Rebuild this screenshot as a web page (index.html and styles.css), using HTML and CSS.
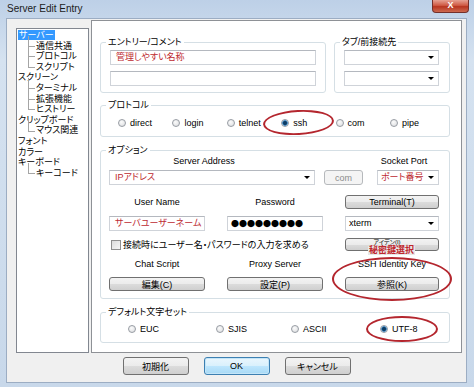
FILE: index.html
```html
<!DOCTYPE html>
<html lang="ja">
<head>
    <meta charset="UTF-8">
    <title>Server Edit Entry</title>
    <link rel="stylesheet" href="styles.css">
</head>
<body>
<div class="window">
    <div class="titlebar">
        <span class="title">Server Edit Entry</span>
        <span class="close">X</span>
    </div>

    <div class="client">
        <div class="top">
            <!-- settings tree -->
            <ul class="tree">
                <li><span class="sel">サーバー</span>
                    <ul class="children">
                        <li>通信共通</li>
                        <li>プロトコル</li>
                        <li>スクリプト</li>
                    </ul>
                </li>
                <li>スクリーン
                    <ul class="children">
                        <li>ターミナル</li>
                        <li>拡張機能</li>
                        <li>ヒストリー</li>
                    </ul>
                </li>
                <li>クリップボード
                    <ul class="children">
                        <li>マウス関連</li>
                    </ul>
                </li>
                <li>フォント</li>
                <li>カラー</li>
                <li>キーボード
                    <ul class="children">
                        <li>キーコード</li>
                    </ul>
                </li>
            </ul>

            <div class="page">
                <div class="row-top">
                    <fieldset class="group entry">
                        <legend>エントリー/コメント</legend>
                        <div class="body stack">
                            <div class="edit red">管理しやすい名称</div>
                            <div class="edit"></div>
                        </div>
                    </fieldset>
                    <fieldset class="group tab">
                        <legend>タブ/前接続先</legend>
                        <div class="body stack">
                            <div class="combo"><span></span><i class="arrow"></i></div>
                            <div class="combo"><span></span><i class="arrow"></i></div>
                        </div>
                    </fieldset>
                </div>

                <fieldset class="group protocol">
                    <legend>プロトコル</legend>
                    <div class="body radios">
                        <label class="radio"><span class="dot"></span>direct</label>
                        <label class="radio"><span class="dot"></span>login</label>
                        <label class="radio"><span class="dot"></span>telnet</label>
                        <label class="radio"><span class="dot on"></span>ssh</label>
                        <label class="radio"><span class="dot"></span>com</label>
                        <label class="radio"><span class="dot"></span>pipe</label>
                    </div>
                </fieldset>

                <fieldset class="group options">
                    <legend>オプション</legend>
                    <div class="body">
                        <div class="addr-labels">
                            <span class="lbl-addr">Server Address</span>
                            <span class="lbl-port">Socket Port</span>
                        </div>
                        <div class="addr-row">
                            <div class="combo addr"><span class="red">IPアドレス</span><i class="arrow"></i></div>
                            <div class="btn disabled com">com</div>
                            <div class="combo port"><span class="red">ポート番号</span><i class="arrow"></i></div>
                        </div>
                        <div class="opt-grid">
                            <span class="lbl">User Name</span>
                            <span class="lbl">Password</span>
                            <div class="btn">Terminal(T)</div>

                            <div class="edit red">サーバユーザーネーム</div>
                            <div class="edit pass"><span class="dots">●●●●●●●●●</span></div>
                            <div class="combo"><span>xterm</span><i class="arrow"></i></div>

                            <label class="check"><span class="box"></span>接続時にユーザー名・パスワードの入力を求める</label>
                            <div class="btn ident"><span class="cap">アイデン(I)</span><span class="note">秘密鍵選択</span></div>

                            <span class="lbl">Chat Script</span>
                            <span class="lbl">Proxy Server</span>
                            <span class="lbl">SSH Identity Key</span>

                            <div class="btn">編集(C)</div>
                            <div class="btn">設定(P)</div>
                            <div class="btn">参照(K)</div>
                        </div>
                    </div>
                </fieldset>

                <fieldset class="group charset">
                    <legend>デフォルト文字セット</legend>
                    <div class="body radios">
                        <label class="radio"><span class="dot"></span>EUC</label>
                        <label class="radio"><span class="dot"></span>SJIS</label>
                        <label class="radio"><span class="dot"></span>ASCII</label>
                        <label class="radio"><span class="dot on"></span>UTF-8</label>
                    </div>
                </fieldset>
            </div>
        </div>

        <div class="buttons">
            <div class="btn">初期化</div>
            <div class="btn default">OK</div>
            <div class="btn">キャンセル</div>
        </div>
    </div>

    <!-- red marks drawn over the screenshot -->
    <div class="mark m-ssh"></div>
    <div class="mark m-key"></div>
    <div class="mark m-utf"></div>
</div>
</body>
</html>
```

FILE: styles.css
```css
* {
    box-sizing: border-box;
    margin: 0;
    padding: 0;
}

body {
    width: 474px;
    height: 387px;
    overflow: hidden;
    background: linear-gradient(#bdd0e7, #d5e2f0 60px, #c8d8ea);
    font-family: "Liberation Sans", "Noto Sans CJK JP", sans-serif;
    font-size: 9px;
    color: #000;
    font-feature-settings: "palt";
}

.window {
    position: relative;
    height: 387px;
}

/* title bar */
.titlebar {
    height: 18px;
    display: flex;
    align-items: flex-start;
}

.title {
    font-size: 10px;
    padding: 3px 0 0 7px;
    color: #1b1b1b;
}

.close {
    margin-left: auto;
    margin-right: 5px;
    width: 37px;
    height: 13px;
    background: linear-gradient(#e6a193, #cf5a44 45%, #b83520 55%, #cd6a50);
    border: 1px solid #74302a;
    border-top: none;
    border-radius: 0 0 4px 4px;
    color: #fff;
    font-weight: bold;
    font-size: 9px;
    line-height: 11px;
    text-align: center;
}

/* client area */
.client {
    margin-left: 6px;
    width: 461px;
    height: 365px;
    background: #f0f0f0;
    border: 1px solid #9cadc3;
    display: flex;
    flex-direction: column;
}

.top {
    display: flex;
    align-items: flex-end;
    gap: 2px;
    padding: 1px 4px 0 9px;
}

/* tree */
.tree {
    list-style: none;
    width: 73px;
    height: 325px;
    background: #fff;
    border: 1px solid #828790;
    padding: 1px 0 0 1px;
    line-height: 10.6px;
}

.tree ul {
    list-style: none;
}

.tree .sel {
    background: #3399ff;
    color: #fff;
    padding: 0 1px;
}

.tree .children {
    margin-left: 10px;
}

.tree .children li {
    position: relative;
    padding-left: 8px;
}

.tree .children li::before {
    content: "";
    position: absolute;
    left: 0;
    top: -5px;
    width: 6px;
    height: 10.3px;
    border-left: 1px solid #a5a5a5;
    border-bottom: 1px solid #a5a5a5;
}

/* page */
.page {
    width: 371px;
    height: 333px;
    background: #fff;
    border: 1px solid #8e9196;
    padding: 15px 11px 0 8px;
    display: flex;
    flex-direction: column;
}

.group {
    border: 1px solid #d5dfe5;
    border-radius: 3px;
    min-width: 0;
}

.group legend {
    margin-left: 5px;
    padding: 0 2px;
    line-height: 12px;
}

.row-top {
    display: flex;
    gap: 8px;
}

.entry {
    width: 226px;
}

.tab {
    width: 116px;
}

.stack {
    display: flex;
    flex-direction: column;
    gap: 6px;
    padding: 2px 0 6px 9px;
}

.entry .edit {
    width: 206px;
}

.tab .combo {
    width: 95px;
}

.edit, .combo {
    height: 15px;
    background: #fff;
    border: 1px solid #cfd3d9;
    border-top-color: #b4b8bf;
    padding-left: 5px;
    line-height: 13px;
    white-space: nowrap;
    overflow: hidden;
}

.combo {
    display: flex;
    align-items: center;
    padding-left: 3px;
}

.combo .arrow {
    margin-left: auto;
    margin-right: 4px;
    border-left: 3px solid transparent;
    border-right: 3px solid transparent;
    border-top: 3px solid #000;
}

.red {
    color: #bd2a31;
}

/* radio rows */
.protocol {
    margin-top: 6px;
}

.protocol .radios {
    display: grid;
    grid-template-columns: repeat(6, 54.4px);
    padding: 5px 0 7px 17px;
}

.charset {
    margin-top: 7px;
}

.charset .radios {
    display: grid;
    grid-template-columns: 88px 75px 89px auto;
    padding: 4px 0 7px 27px;
}

.radio {
    display: flex;
    align-items: center;
    gap: 4px;
    height: 13px;
}

.dot {
    width: 8px;
    height: 8px;
    border-radius: 50%;
    border: 1px solid #979ca3;
    background: radial-gradient(circle at 40% 35%, #fbfbfb, #d9dbde);
}

.dot.on {
    background: radial-gradient(circle, #0c3b63 0 1.5px, #3e8ccb 2.5px, #d9e9f5 3.2px);
}

/* options */
.options {
    margin-top: 7px;
}

.options .body {
    padding: 0 0 7px 8px;
}

.addr-labels {
    display: flex;
    line-height: 10px;
    margin-bottom: 4px;
}

.lbl-addr {
    width: 190px;
    text-align: center;
}

.lbl-port {
    margin-left: 78px;
    width: 54px;
    text-align: center;
}

.addr-row {
    display: flex;
}

.combo.addr {
    width: 206px;
    padding-left: 5px;
}

.btn.com {
    margin-left: 9px;
    width: 39px;
    height: 15px;
}

.combo.port {
    margin-left: 14px;
    width: 62px;
}

.opt-grid {
    margin-top: 10px;
    display: grid;
    grid-template-columns: 96px 96px 94px;
    grid-template-rows: 14px 15px 13px 12px 14px;
    gap: 7px 22px;
}

.lbl {
    text-align: center;
    align-self: center;
}

.edit.pass {
    padding-left: 3px;
}

.dots {
    font-family: "Noto Sans CJK JP", sans-serif;
    font-feature-settings: normal;
    font-size: 8px;
}

.check {
    grid-column: 1 / 3;
    display: flex;
    align-items: center;
    gap: 2px;
    padding-left: 2px;
    white-space: nowrap;
}

.check .box {
    width: 10px;
    height: 10px;
    border: 1px solid #8f8f8f;
    background: linear-gradient(135deg, #dcdcdc, #f6f6f6);
}

/* buttons */
.btn {
    height: 100%;
    border: 1px solid #707070;
    border-radius: 3px;
    background: linear-gradient(#f3f3f3, #ebebeb 50%, #dcdcdc 50%, #cfcfcf);
    display: flex;
    align-items: center;
    justify-content: center;
    white-space: nowrap;
}

.btn.disabled {
    border-color: #b6b9bc;
    background: #f4f4f4;
    color: #8c8c8c;
}

.btn.ident {
    position: relative;
    align-items: flex-start;
    padding-right: 10px;
}

.ident .cap {
    font-size: 6px;
    line-height: 7px;
}

.ident .note {
    position: absolute;
    left: 22px;
    top: 7px;
    padding: 0 1px;
    background: #e8e8e8;
    color: #c0262e;
    line-height: 9px;
    font-weight: bold;
}

.buttons {
    display: flex;
    justify-content: center;
    gap: 15px;
    margin-top: 4px;
}

.buttons .btn {
    width: 66px;
    height: 18px;
}

.btn.default {
    border-color: #3c7fb1;
    background: linear-gradient(#eaf6fd, #d9f0fc 50%, #bee6fd 50%, #a7d9f5);
    box-shadow: inset 0 0 0 1px #c3e5f8;
}

/* red annotations */
.mark {
    position: absolute;
    border: 2px solid #b4262e;
    border-radius: 50%;
}

.m-ssh {
    left: 263px;
    top: 110px;
    width: 71px;
    height: 25px;
    transform: rotate(-3deg);
}

.m-key {
    left: 332px;
    top: 257px;
    width: 120px;
    height: 44px;
}

.m-utf {
    left: 366px;
    top: 316px;
    width: 72px;
    height: 26px;
}
```
